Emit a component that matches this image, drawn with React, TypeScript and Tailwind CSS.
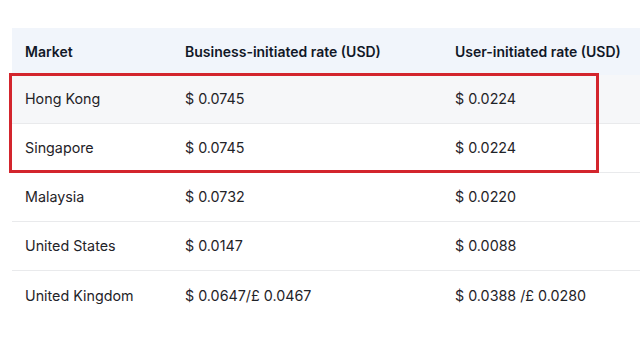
import React from "react";

const rows = [
  { m: "Hong Kong", b: "$ 0.0745", u: "$ 0.0224", bg: "bg-[#f6f7f9]" },
  { m: "Singapore", b: "$ 0.0745", u: "$ 0.0224", bg: "bg-white" },
  { m: "Malaysia", b: "$ 0.0732", u: "$ 0.0220", bg: "bg-white" },
  { m: "United States", b: "$ 0.0147", u: "$ 0.0088", bg: "bg-white" },
  { m: "United Kingdom", b: "$ 0.0647/£ 0.0467", u: "$ 0.0388 /£ 0.0280", bg: "bg-white" },
];

export default function App() {
  return (
    <div className="w-[640px] h-[360px] bg-white overflow-hidden relative" style={{ fontFamily: "Inter, 'Noto Sans', sans-serif" }}>
      <div className="pt-[28px] pl-[12px] w-[660px]">
        <div className="grid grid-cols-[160px_270px_1fr] items-center h-[47px] bg-[#f1f5fb] text-[14px] font-semibold text-[#111827]">
          <div className="pl-[13px]">Market</div>
          <div className="pl-[13px]">Business-initiated rate (USD)</div>
          <div className="pl-[13px]">User-initiated rate (USD)</div>
        </div>
        {rows.map((r, i) => (
          <div
            key={r.m}
            className={`grid grid-cols-[160px_270px_1fr] items-center h-[49px] text-[14.3px] text-[#1f2328] ${r.bg} ${i < rows.length - 1 ? "border-b border-[#e9eaec]" : ""}`}
          >
            <div className="pl-[13px]">{r.m}</div>
            <div className="pl-[13px]">{r.b}</div>
            <div className="pl-[13px]">{r.u}</div>
          </div>
        ))}
      </div>
      <div className="absolute left-[9px] top-[73px] w-[590px] h-[100px] border-[3px] border-[#d3252d]" />
    </div>
  );
}
